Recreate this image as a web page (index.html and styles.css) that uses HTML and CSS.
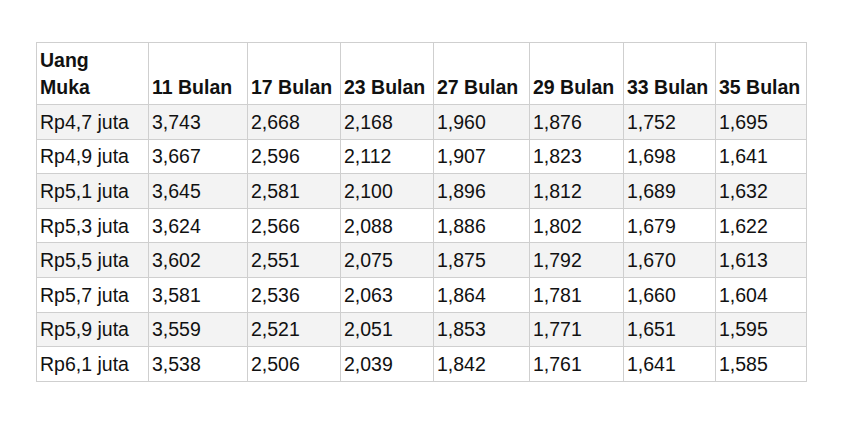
FILE: index.html
```html
<!DOCTYPE html>
<html>
<head>
<meta charset="utf-8">
<link rel="stylesheet" href="styles.css">
</head>
<body>
<table class="tbl">
  <colgroup>
    <col class="c0"><col class="c1"><col class="c2"><col class="c3"><col class="c4"><col class="c5"><col class="c6"><col class="c7">
  </colgroup>
  <thead>
    <tr class="head">
      <th>Uang<br>Muka</th><th>11 Bulan</th><th>17 Bulan</th><th>23 Bulan</th><th>27 Bulan</th><th>29 Bulan</th><th>33 Bulan</th><th>35 Bulan</th>
    </tr>
  </thead>
  <tbody>
    <tr class="odd"><td>Rp4,7 juta</td><td>3,743</td><td>2,668</td><td>2,168</td><td>1,960</td><td>1,876</td><td>1,752</td><td>1,695</td></tr>
    <tr><td>Rp4,9 juta</td><td>3,667</td><td>2,596</td><td>2,112</td><td>1,907</td><td>1,823</td><td>1,698</td><td>1,641</td></tr>
    <tr class="odd"><td>Rp5,1 juta</td><td>3,645</td><td>2,581</td><td>2,100</td><td>1,896</td><td>1,812</td><td>1,689</td><td>1,632</td></tr>
    <tr><td>Rp5,3 juta</td><td>3,624</td><td>2,566</td><td>2,088</td><td>1,886</td><td>1,802</td><td>1,679</td><td>1,622</td></tr>
    <tr class="odd"><td>Rp5,5 juta</td><td>3,602</td><td>2,551</td><td>2,075</td><td>1,875</td><td>1,792</td><td>1,670</td><td>1,613</td></tr>
    <tr><td>Rp5,7 juta</td><td>3,581</td><td>2,536</td><td>2,063</td><td>1,864</td><td>1,781</td><td>1,660</td><td>1,604</td></tr>
    <tr class="odd"><td>Rp5,9 juta</td><td>3,559</td><td>2,521</td><td>2,051</td><td>1,853</td><td>1,771</td><td>1,651</td><td>1,595</td></tr>
    <tr><td>Rp6,1 juta</td><td>3,538</td><td>2,506</td><td>2,039</td><td>1,842</td><td>1,761</td><td>1,641</td><td>1,585</td></tr>
  </tbody>
</table>
</body>
</html>
```
FILE: styles.css
```css
html, body {
  margin: 0;
  padding: 0;
  background: #ffffff;
}
body {
  font-family: "Liberation Sans", Arial, sans-serif;
  color: #111;
}
.tbl {
  border-collapse: collapse;
  table-layout: fixed;
  margin: 42px 0 0 36px;
  width: 771px;
  font-size: 19.5px;
}
.c0 { width: 112px; }
.c1 { width: 99px; }
.c2 { width: 93px; }
.c3 { width: 93px; }
.c4 { width: 96px; }
.c5 { width: 94px; }
.c6 { width: 92px; }
.c7 { width: 91px; }
.tbl th, .tbl td {
  border: 1px solid #cfcfcf;
  padding: 0 3px;
  text-align: left;
  white-space: nowrap;
  overflow: hidden;
}
.tbl th {
  font-weight: bold;
  vertical-align: bottom;
  line-height: 27px;
  padding-bottom: 3px;
  padding-top: 4px;
  height: 54px;
}
.tbl td {
  height: 33.6px;
  line-height: 22px;
  vertical-align: middle;
  padding-top: 0;
  padding-bottom: 0;
}
.odd td {
  background: #f3f3f3;
}
```
